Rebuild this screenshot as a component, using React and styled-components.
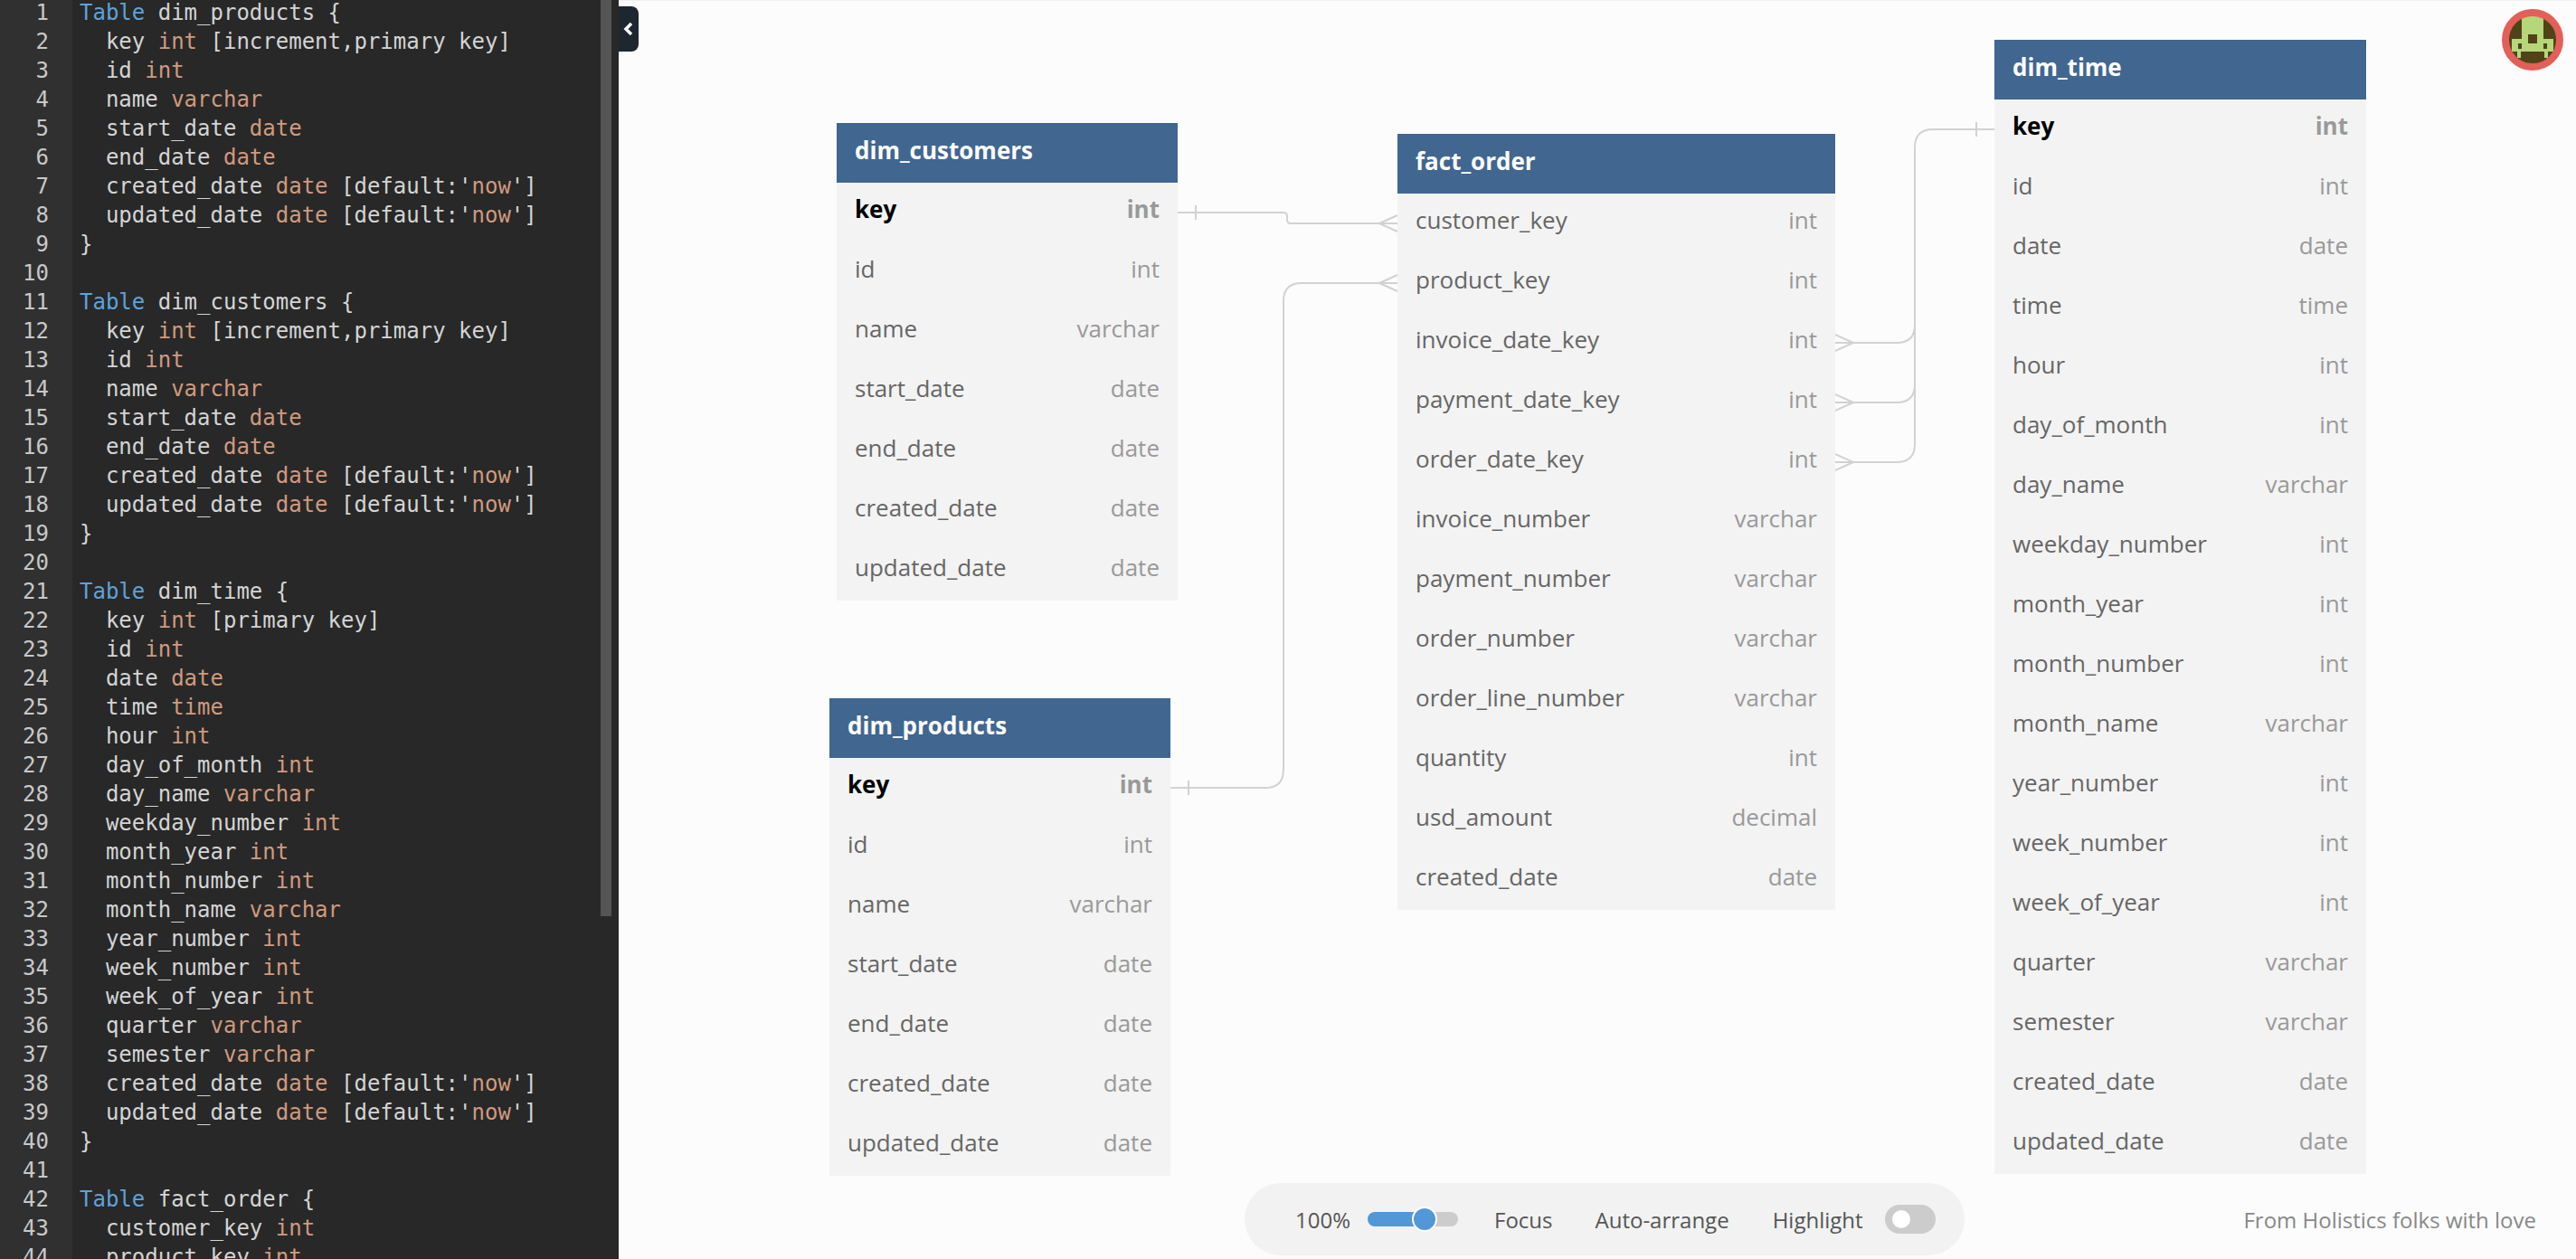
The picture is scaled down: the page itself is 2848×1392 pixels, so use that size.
import React from "react";
import styled, { createGlobalStyle } from "styled-components";

const GlobalStyle = createGlobalStyle`
  html, body, #root {
    margin: 0;
    height: 100%;
    overflow: hidden;
  }
  body {
    background: #fcfcfc;
    font-family: "Open Sans", "Liberation Sans", sans-serif;
  }
`;

const DBML = `Table dim_products {
  key int [increment,primary key]
  id int
  name varchar
  start_date date
  end_date date
  created_date date [default:'now']
  updated_date date [default:'now']
}

Table dim_customers {
  key int [increment,primary key]
  id int
  name varchar
  start_date date
  end_date date
  created_date date [default:'now']
  updated_date date [default:'now']
}

Table dim_time {
  key int [primary key]
  id int
  date date
  time time
  hour int
  day_of_month int
  day_name varchar
  weekday_number int
  month_year int
  month_number int
  month_name varchar
  year_number int
  week_number int
  week_of_year int
  quarter varchar
  semester varchar
  created_date date [default:'now']
  updated_date date [default:'now']
}

Table fact_order {
  customer_key int
  product_key int`.split("\n");

const common = [
  ["key", "int"],
  ["id", "int"],
  ["name", "varchar"],
  ["start_date", "date"],
  ["end_date", "date"],
  ["created_date", "date"],
  ["updated_date", "date"],
];

const TABLES = [
  { name: "dim_customers", x: 241, y: 136, w: 377, rows: common },
  { name: "dim_products", x: 233, y: 772, w: 377, rows: common },
  {
    name: "fact_order",
    x: 861,
    y: 148,
    w: 484,
    rows: [
      ["customer_key", "int"],
      ["product_key", "int"],
      ["invoice_date_key", "int"],
      ["payment_date_key", "int"],
      ["order_date_key", "int"],
      ["invoice_number", "varchar"],
      ["payment_number", "varchar"],
      ["order_number", "varchar"],
      ["order_line_number", "varchar"],
      ["quantity", "int"],
      ["usd_amount", "decimal"],
      ["created_date", "date"],
    ],
  },
  {
    name: "dim_time",
    x: 1521,
    y: 44,
    w: 411,
    rows: [
      ["key", "int"],
      ["id", "int"],
      ["date", "date"],
      ["time", "time"],
      ["hour", "int"],
      ["day_of_month", "int"],
      ["day_name", "varchar"],
      ["weekday_number", "int"],
      ["month_year", "int"],
      ["month_number", "int"],
      ["month_name", "varchar"],
      ["year_number", "int"],
      ["week_number", "int"],
      ["week_of_year", "int"],
      ["quarter", "varchar"],
      ["semester", "varchar"],
      ["created_date", "date"],
      ["updated_date", "date"],
    ],
  },
];

const Page = styled.div`
  display: flex;
  width: 100%;
  height: 100%;
`;

const Editor = styled.aside`
  position: relative;
  flex: 0 0 684px;
  display: flex;
  overflow: hidden;
  background: #282828;
  font-family: "DejaVu Sans Mono", "Liberation Mono", monospace;
  font-size: 24px;
  line-height: 32px;
`;

const Gutter = styled.div`
  flex: 0 0 80px;
  box-sizing: border-box;
  padding-right: 26px;
  background: #303030;
  color: #c8c8c8;
  text-align: right;
`;

const Code = styled.pre`
  flex: 1;
  margin: 0;
  padding-left: 8px;
  font: inherit;
  color: #d4d4d4;
  white-space: pre;
`;

const CodeLine = styled.div`
  height: 32px;
  position: relative;
  top: -2px;
`;

const Keyword = styled.span`
  color: #5fa2da;
`;

const TypeName = styled.span`
  color: #d09a7e;
`;

const Scrollbar = styled.div`
  position: absolute;
  top: 0;
  right: 8px;
  width: 12px;
  height: 1013px;
  background: #555;
`;

const Canvas = styled.main`
  position: relative;
  flex: 1;
  overflow: hidden;
  background: #fcfcfc;
  border-top: 1px solid #f0f0f0;
  box-sizing: border-box;
`;

const Collapse = styled.button`
  position: absolute;
  top: 6px;
  left: 0;
  display: flex;
  align-items: center;
  justify-content: center;
  width: 22px;
  height: 50px;
  padding: 0;
  border: 0;
  border-radius: 0 8px 8px 0;
  background: #1e2630;
`;

const Table = styled.section`
  position: absolute;
  left: ${(p) => p.$x}px;
  top: ${(p) => p.$y - 1}px;
  width: ${(p) => p.$w}px;
  background: #f3f3f3;
`;

const TableHead = styled.header`
  display: flex;
  align-items: center;
  box-sizing: border-box;
  height: 66px;
  padding: 0 21px 7px 20px;
  background: #416690;
  color: #fff;
  font-size: 26px;
  font-weight: 700;
`;

const Row = styled.div`
  display: flex;
  align-items: center;
  justify-content: space-between;
  box-sizing: border-box;
  height: 66px;
  padding: 0 20px 8px 20px;
  font-size: 26px;
  font-weight: ${(p) => (p.$primary ? 700 : 400)};
`;

const FieldName = styled.span`
  color: ${(p) => (p.$primary ? "#000" : "#666")};
`;

const FieldType = styled.span`
  color: #999;
`;

const Links = styled.svg`
  position: absolute;
  top: -1px;
  left: 0;
  width: 100%;
  height: 100%;
  fill: none;
  stroke: #d2d2d2;
  stroke-width: 2;
`;

const Toolbar = styled.div`
  position: absolute;
  left: 692px;
  bottom: 4px;
  display: flex;
  align-items: center;
  box-sizing: border-box;
  width: 796px;
  height: 80px;
  padding: 0 32px 0 56px;
  border-radius: 40px;
  background: #f2f2f2;
  color: #555;
  font-size: 24px;
  white-space: nowrap;
`;

const Zoom = styled.span`
  margin-right: 19px;
`;

const Slider = styled.div`
  position: relative;
  width: 100px;
  height: 16px;
  margin-right: 40px;
  border-radius: 8px;
  background: linear-gradient(to right, #5297d6 63px, #ccc 63px);
`;

const Thumb = styled.div`
  position: absolute;
  top: -6px;
  left: 49px;
  box-sizing: border-box;
  width: 28px;
  height: 28px;
  border: 2px solid #fff;
  border-radius: 50%;
  background: #5297d6;
`;

const ToolLabel = styled.span`
  margin-right: ${(p) => p.$gap}px;
`;

const Switch = styled.div`
  display: flex;
  align-items: center;
  box-sizing: border-box;
  width: 56px;
  height: 32px;
  padding-left: 8px;
  border-radius: 16px;
  background: #ccc;
`;

const Knob = styled.div`
  width: 20px;
  height: 20px;
  border-radius: 50%;
  background: #fff;
`;

const Credit = styled.div`
  position: absolute;
  right: 44px;
  bottom: 27px;
  color: #888;
  font-size: 24px;
`;

const Avatar = styled.svg`
  position: absolute;
  top: 9px;
  right: 14px;
  width: 68px;
  height: 68px;
`;

function CodeText({ line }) {
  if (line.startsWith("Table ")) {
    return (
      <>
        <Keyword>Table</Keyword>
        {line.slice(5)}
      </>
    );
  }
  const m = line.match(/^(\s+\S+ )(\S+)(.*)$/);
  if (!m) return line || " ";
  const [, field, type, rest] = m;
  const parts = rest.split("now");
  return (
    <>
      {field}
      <TypeName>{type}</TypeName>
      {parts[0]}
      {parts.length > 1 && <TypeName>now</TypeName>}
      {parts[1]}
    </>
  );
}

function DbTable({ name, x, y, w, rows }) {
  return (
    <Table $x={x} $y={y} $w={w}>
      <TableHead>{name}</TableHead>
      {rows.map(([field, type]) => {
        const primary = field === "key";
        return (
          <Row key={field} $primary={primary}>
            <FieldName $primary={primary}>{field}</FieldName>
            <FieldType>{type}</FieldType>
          </Row>
        );
      })}
    </Table>
  );
}

// coordinates are relative to the canvas, which starts at x=684
function Relations() {
  return (
    <Links>
      <path d="M618 235H735q4 0 4 4v4q0 4 4 4H861" />
      <path d="M638 227v16" />
      <path d="M841 247L861 238M841 247L861 256" />

      <path d="M610 871H715q20 0 20-20V333q0-20 20-20H861" />
      <path d="M630 863v16" />
      <path d="M841 313L861 304M841 313L861 322" />

      <path d="M1521 143H1453q-20 0-20 20V491q0 20-20 20H1345" />
      <path d="M1433 359q0 20-20 20H1345" />
      <path d="M1433 425q0 20-20 20H1345" />
      <path d="M1501 135v16" />
      <path d="M1365 379L1345 370M1365 379L1345 388" />
      <path d="M1365 445L1345 436M1365 445L1345 454" />
      <path d="M1365 511L1345 502M1365 511L1345 520" />
    </Links>
  );
}

export default function App() {
  return (
    <Page>
      <GlobalStyle />
      <Editor>
        <Gutter>
          {DBML.map((_, i) => (
            <CodeLine key={i}>{i + 1}</CodeLine>
          ))}
        </Gutter>
        <Code>
          {DBML.map((line, i) => (
            <CodeLine key={i}>
              <CodeText line={line} />
            </CodeLine>
          ))}
        </Code>
        <Scrollbar />
      </Editor>
      <Canvas>
        <Relations />
        {TABLES.map((t) => (
          <DbTable key={t.name} {...t} />
        ))}
        <Collapse aria-label="Collapse editor">
          <svg width="12" height="18" viewBox="0 0 12 18" fill="none">
            <path d="M9 3L3 9l6 6" stroke="#fff" strokeWidth="3.5" />
          </svg>
        </Collapse>
        <Toolbar>
          <Zoom>100%</Zoom>
          <Slider>
            <Thumb />
          </Slider>
          <ToolLabel $gap={47}>Focus</ToolLabel>
          <ToolLabel $gap={48}>Auto-arrange</ToolLabel>
          <ToolLabel $gap={24}>Highlight</ToolLabel>
          <Switch>
            <Knob />
          </Switch>
        </Toolbar>
        <Credit>From Holistics folks with love</Credit>
        <Avatar viewBox="0 0 68 68">
          <circle cx="34" cy="34" r="30" fill="#4f4318" />
          <path
            fill="#b6d67a"
            d="M22 8h24v25h11v14h-6v7h-4v-7H21v7h-4v-7h-6V33h11z"
          />
          <path fill="#4f4318" d="M29 28h10v10H29zM18 38h4v6h-4zM46 38h4v6h-4z" />
          <circle cx="34" cy="34" r="30" fill="none" stroke="#e25f5a" strokeWidth="8" />
        </Avatar>
      </Canvas>
    </Page>
  );
}
